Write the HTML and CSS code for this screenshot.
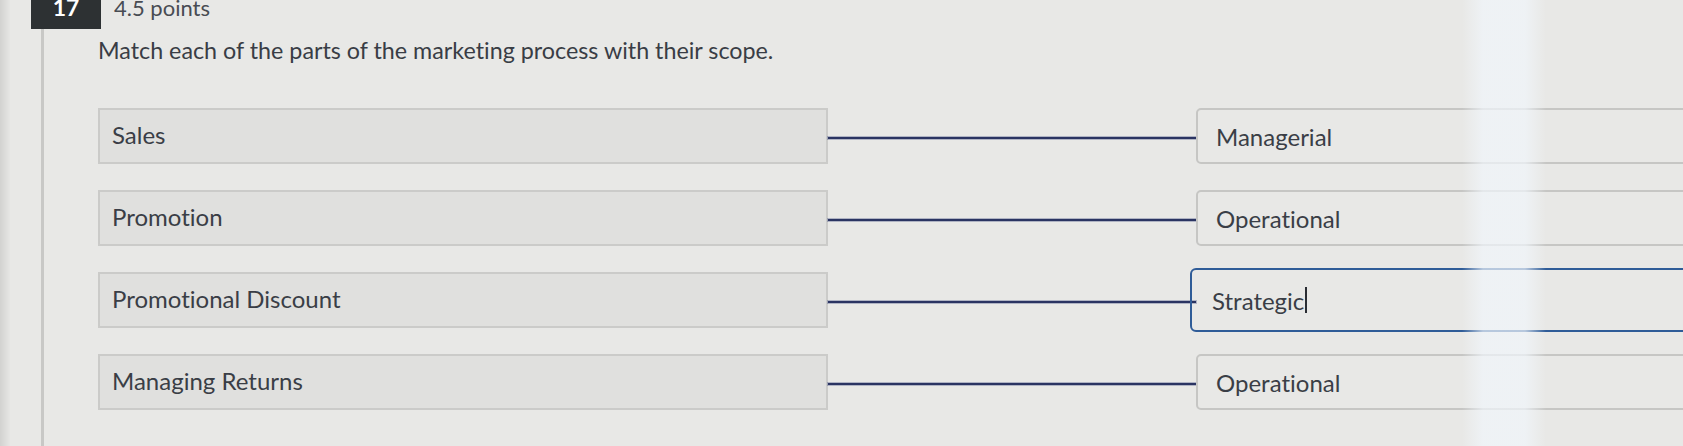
FILE: index.html
```html
<!DOCTYPE html>
<html lang="en">
<head>
<meta charset="utf-8">
<title>Question 17</title>
<link rel="stylesheet" href="styles.css">
</head>
<body>
<div class="screen-edge"></div>
<div class="glare"></div>
<div class="question">
  <div class="header">
    <div class="badge">17</div>
    <div class="points">4.5 points</div>
  </div>
  <div class="qbody">
    <p class="prompt">Match each of the parts of the marketing process with their scope.</p>
    <div class="rows">
      <div class="row">
        <div class="term">Sales</div>
        <div class="connector"><span class="wire"></span></div>
        <div class="answer">Managerial</div>
      </div>
      <div class="row">
        <div class="term">Promotion</div>
        <div class="connector"><span class="wire"></span></div>
        <div class="answer">Operational</div>
      </div>
      <div class="row">
        <div class="term">Promotional Discount</div>
        <div class="connector"><span class="wire"></span></div>
        <div class="answer focused">Strategic<span class="caret"></span></div>
      </div>
      <div class="row">
        <div class="term">Managing Returns</div>
        <div class="connector"><span class="wire"></span></div>
        <div class="answer">Operational</div>
      </div>
    </div>
  </div>
</div>
</body>
</html>
```
FILE: styles.css
```css
html, body {
  margin: 0;
  padding: 0;
  width: 100%;
  height: 100%;
  overflow: hidden;
}
body {
  background: #e8e8e6;
  font-family: "Lato", "Liberation Sans", sans-serif;
  font-variant-ligatures: none;
  color: #3a3e46;
  position: relative;
}
.screen-edge {
  position: absolute;
  left: 0;
  top: 0;
  bottom: 0;
  width: 10px;
  background: linear-gradient(to right, #d2d2d0, #e6e6e4);
  pointer-events: none;
}
.glare {
  position: absolute;
  left: 1462px;
  top: 0;
  bottom: 0;
  width: 84px;
  background: linear-gradient(to right, rgba(242,247,251,0), rgba(241,246,251,0.7) 25%, rgba(241,246,251,0.7) 75%, rgba(242,247,251,0));
  pointer-events: none;
  z-index: 2;
}
.question {
  margin-left: 31px;
}
.header {
  display: flex;
  align-items: flex-start;
  height: 29px;
}
.badge {
  width: 70px;
  height: 29px;
  background: #2d3133;
  color: #ffffff;
  font-weight: 700;
  font-size: 23px;
  line-height: 14px;
  text-align: center;
  overflow: hidden;
}
.points {
  margin-left: 13px;
  font-size: 22px;
  line-height: 18px;
  margin-top: -1px;
  color: #484c53;
}
.qbody {
  margin-left: 10px;
  border-left: 3px solid #c8c8c6;
  padding-left: 54px;
  padding-top: 7px;
  padding-bottom: 40px;
}
.prompt {
  margin: 0;
  font-size: 23.3px;
  line-height: 28px;
  color: #393d45;
}
.rows {
  display: flex;
  flex-direction: column;
  gap: 26px;
  margin-top: 44px;
}
.row {
  display: flex;
  align-items: center;
  height: 56px;
}
.term {
  box-sizing: border-box;
  width: 730px;
  height: 56px;
  flex: none;
  background: #e0e0de;
  border: 2px solid #cbcbc9;
  padding: 0 12px 4px;
  display: flex;
  align-items: center;
  font-size: 24px;
}
.connector {
  width: 368px;
  flex: none;
  display: flex;
  align-items: center;
  padding-top: 4px;
}
.wire {
  display: block;
  width: 100%;
  height: 2px;
  background: #2a3462;
  box-shadow: 0 0 0 1px rgba(70, 80, 130, 0.35);
}
.answer {
  box-sizing: border-box;
  width: 620px;
  height: 56px;
  flex: none;
  border: 2px solid #c6c6c4;
  border-radius: 5px;
  padding: 0 18px;
  display: flex;
  align-items: center;
  font-size: 24px;
}
.answer.focused {
  height: 64px;
  margin-left: -6px;
  padding-left: 20px;
  border: 2px solid #2f5c98;
  border-radius: 6px;
}
.caret {
  display: inline-block;
  width: 2px;
  height: 26px;
  background: #2a2d33;
  margin-left: 1px;
}
```
